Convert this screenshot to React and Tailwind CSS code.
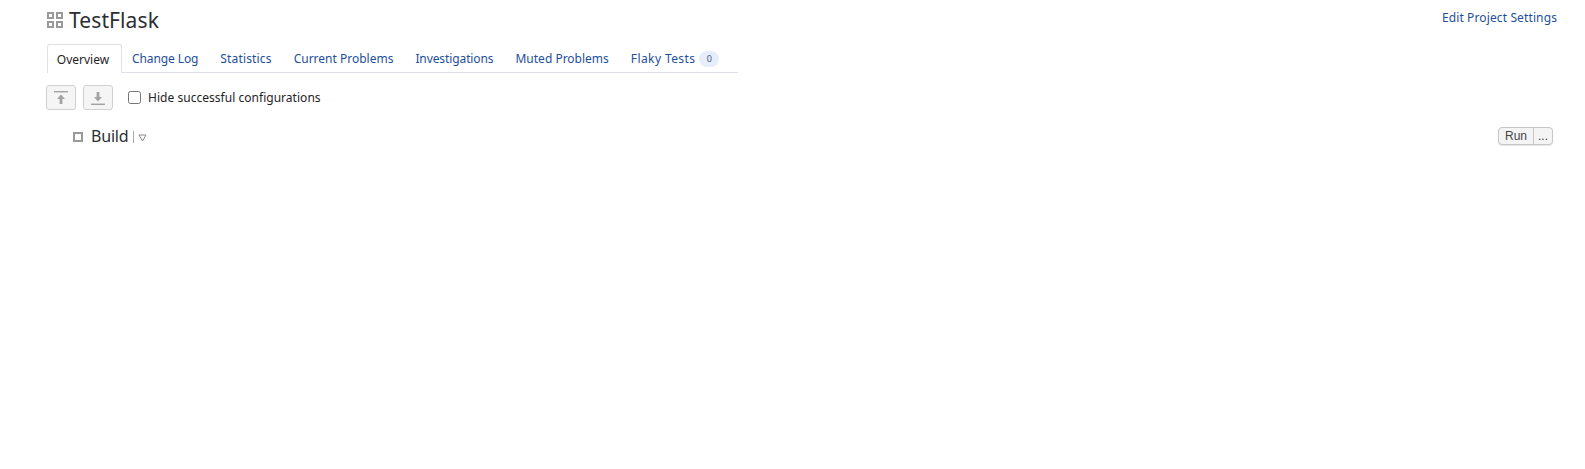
const tabs = [
  { label: "Change Log", cls: "ml-[10px] tracking-[-0.1px]" },
  { label: "Statistics", cls: "ml-[22px] tracking-[0.15px]" },
  { label: "Current Problems", cls: "ml-[22px]" },
  { label: "Investigations", cls: "ml-[22px] tracking-[-0.1px]" },
  { label: "Muted Problems", cls: "ml-[22px]" },
  { label: "Flaky Tests", cls: "ml-[22px] tracking-[0.4px]" },
];

function ProjectIcon() {
  return (
    <svg width="16" height="16" viewBox="0 0 16 16" fill="none" stroke="#999" strokeWidth="2">
      <rect x="1" y="1" width="5" height="5" />
      <rect x="10" y="1" width="5" height="5" />
      <rect x="1" y="10" width="5" height="5" />
      <rect x="10" y="10" width="5" height="5" />
    </svg>
  );
}

function CollapseIcon({ flip }) {
  return (
    <svg width="16" height="16" viewBox="0 0 16 16" className={flip ? "rotate-180" : ""}>
      <rect x="1" y="1" width="14" height="1.4" fill="#a3a3a3" />
      <path d="M8 4.5 L12 9 H9.4 V14 H6.6 V9 H4 Z" fill="#a3a3a3" />
    </svg>
  );
}

export default function App() {
  return (
    <div className="min-h-[469px] bg-white pl-[47px] pr-[28px] font-['Noto_Sans',sans-serif] text-[13px] text-[#1f2326]">
      <div className="flex h-[44px] items-start justify-between">
        <div className="flex items-center gap-[6px] pt-[5px]">
          <ProjectIcon />
          <span className="text-[21px] leading-[30px] tracking-[0.1px] text-[#2b2f33]">TestFlask</span>
        </div>
        <a className="pt-[9px] text-[12px] leading-[18px] tracking-[0.12px] text-[#1d4f9c]">Edit Project Settings</a>
      </div>

      <div className="flex h-[29px] w-[691px] items-stretch border-b border-[#dfe1ea]">
        <div className="mb-[-1px] flex w-[75px] items-center justify-center rounded-t-[3px] border border-b-0 border-[#dfe1ea] bg-white pt-[2px] pr-[3px] text-[12px]">
          Overview
        </div>
        {tabs.map((t) => (
          <a key={t.label} className={`flex items-center pt-[2px] text-[12px] text-[#1d4f9c] ${t.cls}`}>
            {t.label}
          </a>
        ))}
        <span className="ml-[4px] mt-[1px] flex h-[16px] w-[20px] items-center justify-center self-center rounded-full bg-[#e7eefb] text-[9px] text-[#44587d]">
          0
        </span>
      </div>

      <div className="mt-[12px] ml-[-1px] flex h-[25px] items-center">
        <button className="flex h-[25px] w-[30px] items-center justify-center rounded-[3px] border border-[#d0d0d0] bg-[#f5f5f5]">
          <CollapseIcon />
        </button>
        <button className="ml-[7px] flex h-[25px] w-[30px] items-center justify-center rounded-[3px] border border-[#d0d0d0] bg-[#f5f5f5]">
          <CollapseIcon flip />
        </button>
        <input type="checkbox" className="ml-[15px] h-[13px] w-[13px] appearance-none rounded-[2.5px] border border-[#767676] bg-white" />
        <span className="ml-[7px] text-[12px] tracking-[0.03px]">Hide successful configurations</span>
      </div>

      <div className="mt-[14px] flex items-center justify-between">
        <div className="flex items-center pl-[26px]">
          <span className="mt-[1px] h-[10px] w-[10px] border-2 border-[#999]" />
          <span className="ml-[8px] text-[16px] leading-[24px] tracking-[-0.2px] text-[#2b2f33]">Build</span>
          <span className="ml-[5px] mt-[2px] h-[12px] w-px bg-[#aaa]" />
          <svg width="9" height="8" viewBox="0 0 9 8" fill="none" className="ml-[4px] mt-[3px]">
            <path d="M1 1 H8 L4.5 7 Z" stroke="#888" strokeWidth="1" />
          </svg>
        </div>
        <div className="mr-[4px] flex h-[18px] rounded-[4px] border border-[#c6c6c6] bg-[#f4f4f4] font-['Liberation_Sans',sans-serif] text-[12px] text-[#444] shadow-[0_1px_1px_rgba(0,0,0,0.1)]">
          <span className="flex w-[35px] items-center justify-center border-r border-[#c6c6c6]">Run</span>
          <span className="flex w-[18px] items-center justify-center">...</span>
        </div>
      </div>
    </div>
  );
}
